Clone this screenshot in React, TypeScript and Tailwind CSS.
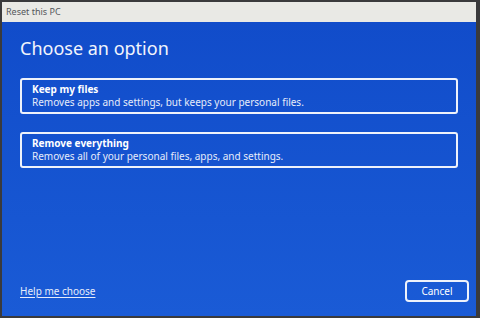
const options = [
  {
    title: "Keep my files",
    description: "Removes apps and settings, but keeps your personal files.",
  },
  {
    title: "Remove everything",
    description: "Removes all of your personal files, apps, and settings.",
  },
];

const App = () => {
  return (
    <div
      className="flex flex-col w-[480px] h-[318px] bg-[#3a3a3c] pt-[2px] pb-[2px] pl-[2px] pr-[4px] overflow-hidden"
      style={{ fontFamily: '"Noto Sans", "Open Sans", sans-serif' }}
    >
      <div className="flex items-center h-[20px] bg-[#e9e9e5] px-[4px] shrink-0">
        <span className="text-[9px] text-[#55585c]">Reset this PC</span>
      </div>
      <div className="flex flex-col flex-1 bg-[#1656d2] bg-gradient-to-b from-[#114cca] to-[#1a5bd6] px-[18px]">
        <h1 className="mt-[14px] text-[18px] leading-[24px] text-[#f2f5fc]">Choose an option</h1>
        <div className="flex flex-col gap-[18px] mt-[18px]">
          {options.map((o) => (
            <div
              key={o.title}
              className="flex flex-col justify-center h-[36px] border-2 border-[#eef2fb] rounded-[3px] px-[10px]"
            >
              <span className="text-[10px] leading-[13px] font-bold text-white">{o.title}</span>
              <span className="text-[10px] leading-[13px] text-[#e6ecfa]">{o.description}</span>
            </div>
          ))}
        </div>
        <div className="flex items-center justify-between mt-auto mb-[14px]">
          <span className="text-[10px] text-[#e6ecfa] underline underline-offset-2">Help me choose</span>
          <button className="w-[64px] h-[22px] mr-[-11px] border-2 border-[#eef2fb] rounded-[4px] text-[10px] text-white">
            Cancel
          </button>
        </div>
      </div>
    </div>
  );
};

export default App;
